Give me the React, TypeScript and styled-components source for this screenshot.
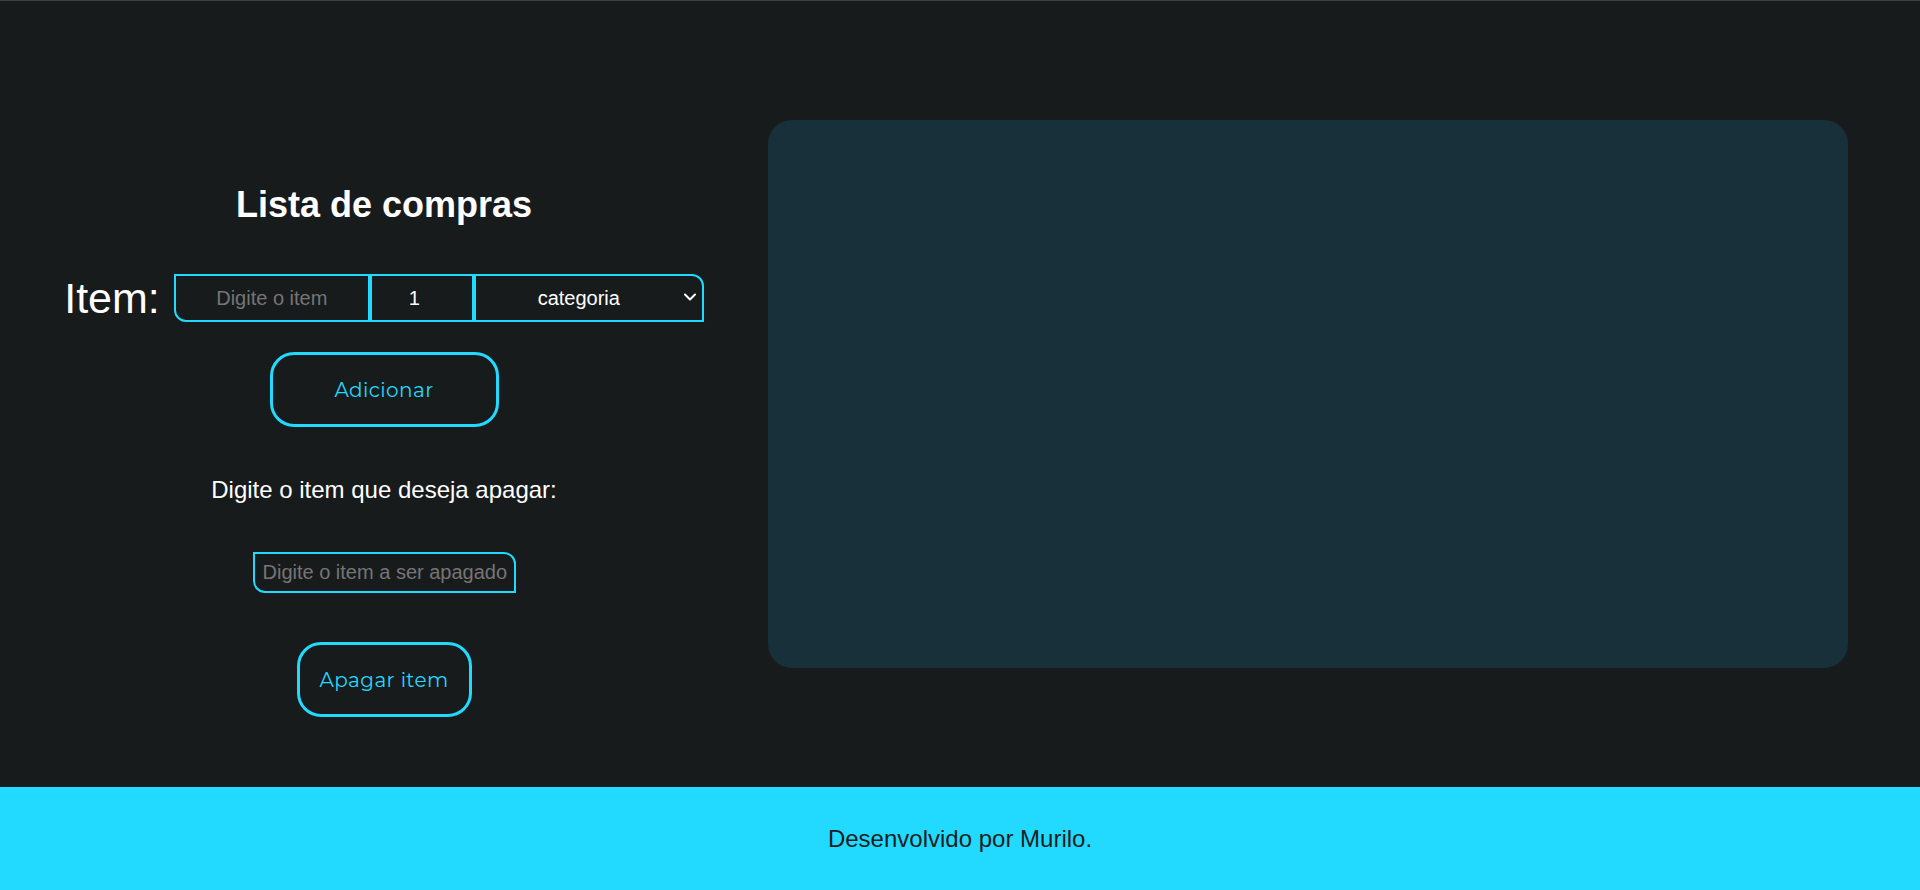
import React from 'react';
import styled, { createGlobalStyle, css } from 'styled-components';

const cyan = '#22d9ff';

const GlobalStyle = createGlobalStyle`
  * { box-sizing: border-box; }
  html, body {
    margin: 0;
    padding: 0;
    background: #181b1c;
    font-family: "Liberation Sans", Arial, sans-serif;
  }
`;

const Page = styled.div`
  display: flex;
  flex-direction: column;
  min-height: 890px;
  border-top: 1px solid #3d3f40;
`;

const Main = styled.main`
  display: grid;
  grid-template-columns: 768px 1fr;
  height: 786px;
`;

const FormColumn = styled.section`
  display: flex;
  flex-direction: column;
  align-items: center;
  padding-top: 183px;
`;

const Title = styled.h1`
  margin: 0;
  font-size: 36px;
  font-weight: 700;
  line-height: 41px;
  color: #ffffff;
`;

const ItemRow = styled.div`
  display: flex;
  align-items: center;
  gap: 14px;
  margin-top: 49px;
`;

const Label = styled.label`
  font-size: 43px;
  color: #ffffff;
  line-height: 48px;
`;

const Fields = styled.div`
  display: flex;
  height: 48px;
`;

const fieldBase = css`
  height: 48px;
  border: 2px solid ${cyan};
  background: transparent;
  color: #ffffff;
  font-family: "Liberation Sans", Arial, sans-serif;
  font-size: 20px;
  text-align: center;
  outline: none;
  &::placeholder {
    color: #757575;
  }
`;

const TextField = styled.input`
  ${fieldBase}
  width: 196px;
  border-radius: 0 0 0 12px;
`;

const NumberField = styled.input`
  ${fieldBase}
  width: 104px;
  padding: 0;
  &::-webkit-inner-spin-button,
  &::-webkit-outer-spin-button {
    opacity: 0;
  }
`;

const SelectWrap = styled.div`
  position: relative;
  width: 230px;
  height: 48px;
`;

const CategorySelect = styled.select`
  ${fieldBase}
  width: 100%;
  appearance: none;
  border-radius: 0 12px 0 0;
  padding: 0 20px 0 0;
  cursor: pointer;
  option {
    background: #181b1c;
    color: #ffffff;
  }
`;

const Chevron = styled.svg`
  position: absolute;
  right: 7px;
  top: 18px;
  width: 14px;
  height: 10px;
  pointer-events: none;
`;

const OutlineButton = styled.button<{ $width: number }>`
  width: ${({ $width }) => $width}px;
  height: 75px;
  border: 3px solid ${cyan};
  border-radius: 24px;
  background: transparent;
  color: ${cyan};
  font-family: "Montserrat", Inter, "Noto Sans", sans-serif;
  font-size: 20px;
  letter-spacing: 0.4px;
  cursor: pointer;
`;

const AddButton = styled(OutlineButton)`
  margin-top: 30px;
`;

const DeleteButton = styled(OutlineButton)`
  margin-top: 49px;
`;

const DeleteLabel = styled.p`
  margin: 49px 0 0;
  font-size: 24px;
  line-height: 28px;
  color: #ffffff;
`;

const DeleteField = styled.input`
  margin-top: 48px;
  width: 263px;
  height: 41px;
  padding: 0 2px 0 8px;
  border: 2px solid ${cyan};
  border-radius: 0 12px 0 12px;
  background: transparent;
  color: #ffffff;
  font-family: "Liberation Sans", Arial, sans-serif;
  font-size: 20px;
  outline: none;
  &::placeholder {
    color: #757575;
  }
`;

const ListColumn = styled.section`
  display: flex;
  align-items: center;
  padding-right: 72px;
`;

const ListPanel = styled.div`
  width: 100%;
  height: 548px;
  border-radius: 24px;
  background: #17303a;
`;

const Footer = styled.footer`
  display: flex;
  align-items: center;
  justify-content: center;
  height: 103px;
  background: ${cyan};
  color: #1b1d1e;
  font-size: 24px;
`;

const App: React.FC = () => {
  const [item, setItem] = React.useState('');
  const [qty, setQty] = React.useState('1');
  const [category, setCategory] = React.useState('');
  const [toDelete, setToDelete] = React.useState('');

  return (
    <>
      <GlobalStyle />
      <Page>
        <Main>
          <FormColumn>
            <Title>Lista de compras</Title>
            <ItemRow>
              <Label htmlFor="item">Item:</Label>
              <Fields>
                <TextField
                  id="item"
                  type="text"
                  placeholder="Digite o item"
                  value={item}
                  onChange={e => setItem(e.target.value)}
                />
                <NumberField
                  type="number"
                  min={1}
                  value={qty}
                  onChange={e => setQty(e.target.value)}
                />
                <SelectWrap>
                  <CategorySelect value={category} onChange={e => setCategory(e.target.value)}>
                    <option value="">categoria</option>
                    <option value="frutas">frutas</option>
                    <option value="limpeza">limpeza</option>
                    <option value="bebidas">bebidas</option>
                  </CategorySelect>
                  <Chevron viewBox="0 0 14 10" fill="none">
                    <path d="M2 2.5L7 7.5L12 2.5" stroke="#ffffff" strokeWidth="2" strokeLinecap="round" strokeLinejoin="round" />
                  </Chevron>
                </SelectWrap>
              </Fields>
            </ItemRow>
            <AddButton $width={229}>Adicionar</AddButton>
            <DeleteLabel>Digite o item que deseja apagar:</DeleteLabel>
            <DeleteField
              type="text"
              placeholder="Digite o item a ser apagado"
              value={toDelete}
              onChange={e => setToDelete(e.target.value)}
            />
            <DeleteButton $width={175}>Apagar item</DeleteButton>
          </FormColumn>
          <ListColumn>
            <ListPanel />
          </ListColumn>
        </Main>
        <Footer>Desenvolvido por Murilo.</Footer>
      </Page>
    </>
  );
};

export default App;
